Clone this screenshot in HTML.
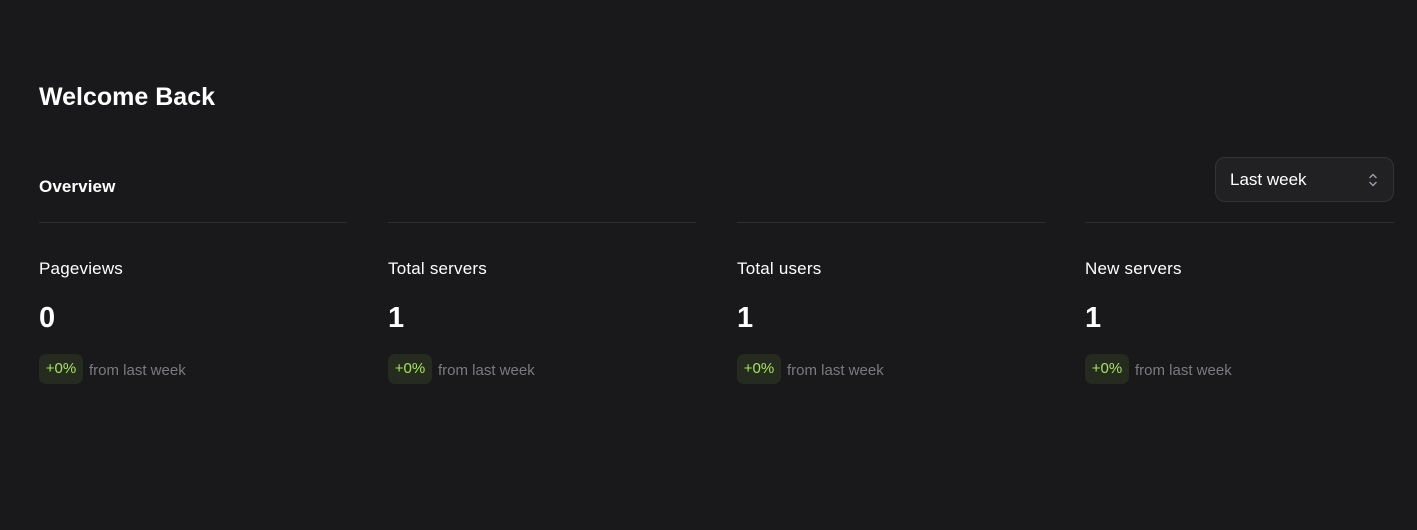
<!DOCTYPE html>
<html><head><style>
html,body{margin:0;background:#19191b;width:1417px;height:530px;overflow:hidden;font-family:"Liberation Sans",sans-serif;color:#fff}
h1{position:absolute;left:39px;top:83px;margin:0;font-size:25px;font-weight:700}
.ov{position:absolute;left:39px;top:177px;font-size:17px;font-weight:700;letter-spacing:.1px}
.sel{position:absolute;left:1215px;top:157px;width:179px;height:45px;box-sizing:border-box;border:1px solid #333336;border-radius:10px;background:#212124;font-size:17px}
.sel span{position:absolute;left:14px;top:12px}
.sel svg{position:absolute;right:14px;top:13px}
.col{position:absolute;top:222px;width:308px;border-top:1px solid #2f2f32}
.lab{position:absolute;top:36px;left:0;font-size:17px;white-space:nowrap;letter-spacing:.2px}
.num{position:absolute;top:79px;left:0;font-size:29px;font-weight:700}
.badge{position:absolute;top:131px;left:0;height:30px;width:44px;border-radius:7px;background:#252b1e;color:#a6e55a;font-size:15px;line-height:30px;text-align:center}
.from{position:absolute;top:139px;left:50px;font-size:15px;color:#7a7a80;white-space:nowrap}
</style></head><body>
<h1>Welcome Back</h1>
<div class="ov">Overview</div>
<div class="sel"><span>Last week</span><svg width="12" height="18" viewBox="0 0 12 18" fill="none" stroke="#9a9aa0" stroke-width="1.5" stroke-linecap="round" stroke-linejoin="round"><path d="M3 6.5L6 3.5L9 6.5M3 11.5L6 14.5L9 11.5"/></svg></div>
<div class="col" style="left:39px"><div class="lab">Pageviews</div><div class="num">0</div><div class="badge">+0%</div><div class="from">from last week</div></div>
<div class="col" style="left:388px"><div class="lab">Total servers</div><div class="num">1</div><div class="badge">+0%</div><div class="from">from last week</div></div>
<div class="col" style="left:737px"><div class="lab">Total users</div><div class="num">1</div><div class="badge">+0%</div><div class="from">from last week</div></div>
<div class="col" style="left:1085px;width:309px"><div class="lab">New servers</div><div class="num">1</div><div class="badge">+0%</div><div class="from">from last week</div></div>
</body></html>
